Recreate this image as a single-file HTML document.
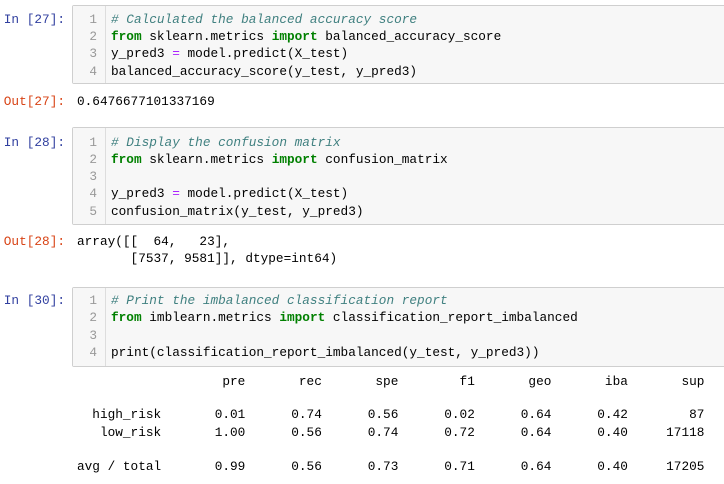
<!DOCTYPE html>
<html><head><meta charset="utf-8"><style>
body{margin:0;width:724px;height:484px;background:#fff;overflow:hidden;position:relative;font-family:"Liberation Mono",monospace;font-size:12.75px;}
.p{position:absolute;right:659px;width:70px;text-align:right;white-space:pre;line-height:17px;font-family:"Liberation Mono",monospace;}
.in{color:#303F9F}.out{color:#D84315}
.box{position:absolute;left:72px;right:-2px;background:#f7f7f7;border:1px solid #cfcfcf;border-radius:2px;}
.g{position:absolute;left:0;top:0;bottom:0;width:32px;border-right:1px solid #ddd;background:#f7f7f7}
.l{position:absolute;white-space:pre;line-height:17px;color:#000}
.n{position:absolute;width:25px;text-align:right;color:#999;line-height:17px}
.k{color:#008000;font-weight:bold}.c{color:#408080;font-style:italic}.o{color:#AA22FF}
</style></head><body>

<div class="p in" style="top:11px">In [27]:</div>
<div class="box" style="top:5px;height:77px"><div class="g"></div></div>
<div class="n" style="left:72px;top:11px">1</div><div class="l" style="left:111px;top:11px"><span class="c"># Calculated the balanced accuracy score</span></div>
<div class="n" style="left:72px;top:28px">2</div><div class="l" style="left:111px;top:28px"><span class="k">from</span> sklearn.metrics <span class="k">import</span> balanced_accuracy_score</div>
<div class="n" style="left:72px;top:45px">3</div><div class="l" style="left:111px;top:45px">y_pred3 <span class="o">=</span> model.predict(X_test)</div>
<div class="n" style="left:72px;top:63px">4</div><div class="l" style="left:111px;top:63px">balanced_accuracy_score(y_test, y_pred3)</div>

<div class="p out" style="top:93px">Out[27]:</div>
<div class="l" style="left:77px;top:93px">0.6476677101337169</div>

<div class="p in" style="top:134px">In [28]:</div>
<div class="box" style="top:127px;height:96px"><div class="g"></div></div>
<div class="n" style="left:72px;top:134px">1</div><div class="l" style="left:111px;top:134px"><span class="c"># Display the confusion matrix</span></div>
<div class="n" style="left:72px;top:151px">2</div><div class="l" style="left:111px;top:151px"><span class="k">from</span> sklearn.metrics <span class="k">import</span> confusion_matrix</div>
<div class="n" style="left:72px;top:168px">3</div>
<div class="n" style="left:72px;top:185px">4</div><div class="l" style="left:111px;top:185px">y_pred3 <span class="o">=</span> model.predict(X_test)</div>
<div class="n" style="left:72px;top:203px">5</div><div class="l" style="left:111px;top:203px">confusion_matrix(y_test, y_pred3)</div>

<div class="p out" style="top:233px">Out[28]:</div>
<div class="l" style="left:77px;top:233px">array([[  64,   23],
       [7537, 9581]], dtype=int64)</div>

<div class="p in" style="top:292px">In [30]:</div>
<div class="box" style="top:287px;height:78px"><div class="g"></div></div>
<div class="n" style="left:72px;top:292px">1</div><div class="l" style="left:111px;top:292px"><span class="c"># Print the imbalanced classification report</span></div>
<div class="n" style="left:72px;top:309px">2</div><div class="l" style="left:111px;top:309px"><span class="k">from</span> imblearn.metrics <span class="k">import</span> classification_report_imbalanced</div>
<div class="n" style="left:72px;top:327px">3</div>
<div class="n" style="left:72px;top:344px">4</div><div class="l" style="left:111px;top:344px">print(classification_report_imbalanced(y_test, y_pred3))</div>

<div class="l" style="left:77px;top:373px;line-height:17px">                   pre       rec       spe        f1       geo       iba       sup</div>
<div class="l" style="left:77px;top:406px;line-height:17.5px">  high_risk       0.01      0.74      0.56      0.02      0.64      0.42        87
   low_risk       1.00      0.56      0.74      0.72      0.64      0.40     17118</div>
<div class="l" style="left:77px;top:458px">avg / total       0.99      0.56      0.73      0.71      0.64      0.40     17205</div>
</body></html>
